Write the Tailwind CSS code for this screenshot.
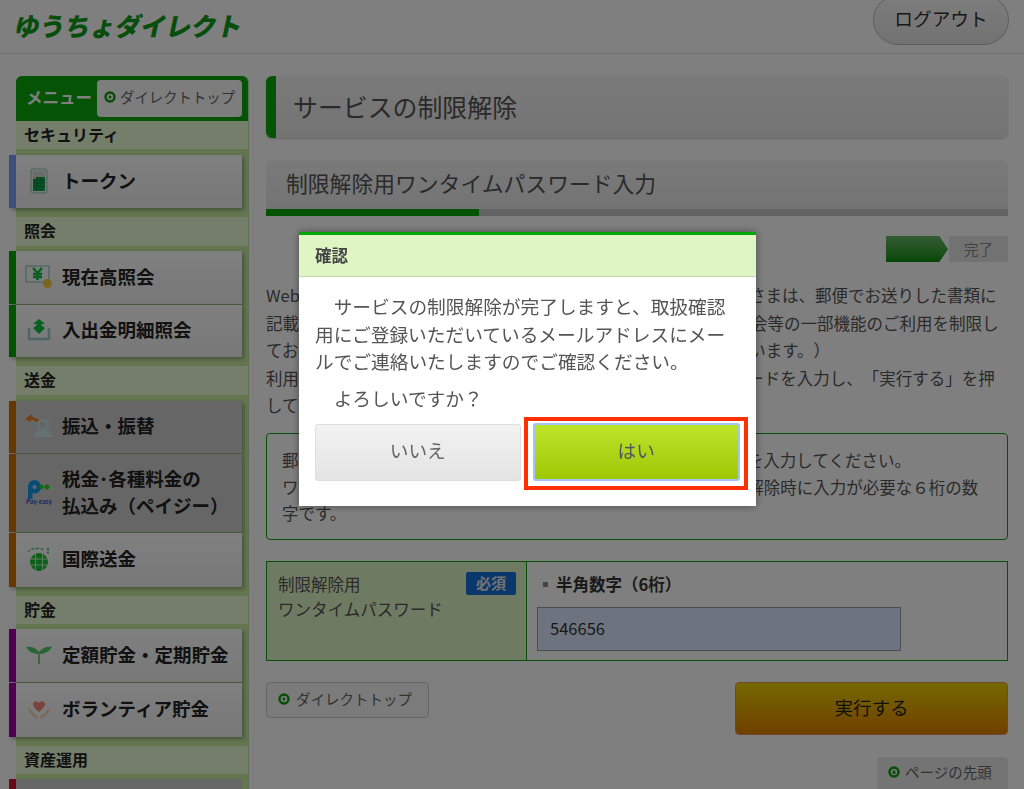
<!DOCTYPE html>
<html lang="ja">
<head>
    <meta charset="UTF-8">
    <meta name="viewport" content="width=device-width, initial-scale=1.0">
    <title>ゆうちょダイレクト</title>
    <script src="https://cdn.jsdelivr.net/npm/@tailwindcss/browser@4"></script>
</head>
<body class="h-[789px] overflow-hidden bg-white text-[#333] text-[16.5px] [text-spacing-trim:space-all] [font-family:'Noto_Sans_CJK_JP',sans-serif]">

    <!-- ヘッダー -->
    <header class="h-[54px] flex justify-between border-b border-[#e4e4e4] pl-[15px] pr-[15px]">
        <div class="h-[50px] leading-[50px] text-[25.5px] font-black text-[#0f9a18] -skew-x-12 whitespace-nowrap tracking-[-0.2px]">ゆうちょダイレクト</div>
        <button class="-mt-[5px] w-[136px] h-[50px] pb-[3px] rounded-full border border-[#bbb] bg-gradient-to-b from-[#fafafa] to-[#e4e4e4] text-[18.7px]">ログアウト</button>
    </header>

    <div class="flex pt-[22px] pl-[16px]">
        <!-- サイドメニュー -->
        <nav class="w-[233px] shrink-0 h-[713px] overflow-visible bg-[#c6eca0] border-r border-[#c0dca8] rounded-t-md">
            <div class="h-[45px] bg-[#0aa80a] rounded-t-md flex items-center justify-between pl-[10px] pr-[6px]">
                <span class="text-white font-bold text-[16.5px] whitespace-nowrap pb-[2px]">メニュー</span>
                <a class="w-[145px] h-[37px] pb-[3px] bg-[#fafafa] rounded-[4px] flex items-center pl-[7px] gap-[4px] text-[14.4px] text-[#666] whitespace-nowrap">
                    <svg class="w-[12px] h-[12px]" viewBox="0 0 12 12"><circle cx="6" cy="6" r="4.5" fill="none" stroke="#0a9a0a" stroke-width="2.4"/><path d="M4.8 3.8 8 6l-3.2 2.2z" fill="#0a9a0a"/></svg>ダイレクトトップ
                </a>
            </div>

            <h2 class="h-[28px] bg-[#eafdd6] pl-[8px] leading-[26px] font-bold text-[16px] text-[#222]">セキュリティ</h2>
            <a class="mt-[6px] -ml-[7px] w-[233px] h-[53px] pb-[2px] border-l-[7px] border-[#7a9cf5] bg-gradient-to-b from-white to-[#f0f0f0] shadow-[2px_2px_4px_rgba(0,0,0,.3)] flex items-center font-bold text-[18.5px] text-[#222]">
                <span class="w-[46px] flex justify-center"><svg class="w-[18px] h-[26px]" viewBox="0 0 18 26"><rect x="1" y="1" width="16" height="24" rx="2" fill="#e8f4ee" stroke="#8cc8b0"/><rect x="3" y="3" width="12" height="6" fill="#d8d8d8"/><rect x="3" y="9" width="12" height="14" fill="#10a850"/><path d="M3 12h12M3 15h12M3 18h12M7 9v14M11 9v14" stroke="#0a7a38" stroke-width=".8"/><rect x="3" y="9" width="3" height="2" fill="#f0d040"/></svg></span>トークン
            </a>

            <h2 class="mt-[9px] h-[29px] bg-[#eafdd6] pl-[8px] leading-[27px] font-bold text-[16px] text-[#222]">照会</h2>
            <a class="mt-[5px] -ml-[7px] w-[233px] h-[53px] pb-[2px] border-l-[7px] border-[#00a800] bg-gradient-to-b from-white to-[#f0f0f0] shadow-[2px_2px_4px_rgba(0,0,0,.3)] flex items-center font-bold text-[18.5px] text-[#222]">
                <span class="w-[46px] flex justify-center"><svg class="w-[28px] h-[26px]" viewBox="0 0 28 26"><rect x="1" y="2" width="23" height="16" fill="#f4fbf8" stroke="#a8d0c8" stroke-width="1.5"/><path d="M8 4l4.500 5L17 4M12.500 9v7M8 10h9M8 13h9" fill="none" stroke="#10c040" stroke-width="2.400"/><circle cx="22.500" cy="19.500" r="4.500" fill="#f8c838"/></svg></span>現在高照会
            </a>
            <a class="mt-[1px] -ml-[7px] w-[233px] h-[52px] pb-[2px] border-l-[7px] border-[#00a800] bg-gradient-to-b from-white to-[#f0f0f0] shadow-[2px_2px_4px_rgba(0,0,0,.3)] flex items-center font-bold text-[18.5px] text-[#222]">
                <span class="w-[46px] flex justify-center"><svg class="w-[24px] h-[24px]" viewBox="0 0 24 24"><path d="M2 10v11h20V10" fill="none" stroke="#a0ccc8" stroke-width="2.500"/><path d="M12 1l6 5h-3.500v1.500L18 10l-6 6-6-6 3.500-2.500V6H6z" fill="#10c040"/></svg></span>入出金明細照会
            </a>

            <h2 class="mt-[9px] h-[29px] bg-[#eafdd6] pl-[8px] leading-[27px] font-bold text-[16px] text-[#222]">送金</h2>
            <a class="mt-[6px] -ml-[7px] w-[233px] h-[52px] pb-[2px] border-l-[7px] border-[#c87000] bg-[#cdcdcd] shadow-[2px_2px_4px_rgba(0,0,0,.3)] flex items-center font-bold text-[18.5px] text-[#222]">
                <span class="w-[46px] flex justify-center"><svg class="w-[28px] h-[24px]" viewBox="0 0 28 24"><path d="M0 5l7-5v2.500l9 4-1 3-9-4V8z" fill="#f08030"/><circle cx="18" cy="11" r="5" fill="none" stroke="#c8e4e8" stroke-width="2.400"/><path d="M9 23c0-5 4-6 9-6s9 1 9 6z" fill="#c8e4e8"/></svg></span>振込・振替
            </a>
            <a class="mt-[1px] -ml-[7px] w-[233px] h-[78px] pb-[2px] border-l-[7px] border-[#c87000] bg-[#cdcdcd] shadow-[2px_2px_4px_rgba(0,0,0,.3)] flex items-center font-bold text-[18.5px] leading-[27px] text-[#222]">
                <span class="w-[46px] flex justify-center"><svg class="w-[26px] h-[26px]" viewBox="0 0 26 26"><path d="M2 20V8c0-4 3-7 6.500-7S15 4 15 8s-3 6.500-6.500 6.500c-1 0-1.500-.300-2-.500v6z" fill="#1098e8"/><circle cx="8.500" cy="8" r="2" fill="#c8c8e8"/><circle cx="15" cy="8" r="2.400" fill="#20d020"/><circle cx="21" cy="8" r="2.400" fill="#20d020"/><path d="M15 8h6" stroke="#20d020"/><text x="0" y="25" font-size="6" fill="#3050c0" textLength="26">Pay-easy</text></svg></span>
                <span>税金･各種料金の<br>払込み（ペイジー）</span>
            </a>
            <a class="mt-[1px] -ml-[7px] w-[233px] h-[54px] pb-[2px] border-l-[7px] border-[#c87000] bg-gradient-to-b from-white to-[#f0f0f0] shadow-[2px_2px_4px_rgba(0,0,0,.3)] flex items-center font-bold text-[18.5px] text-[#222]">
                <span class="w-[46px] flex justify-center"><svg class="w-[26px] h-[26px]" viewBox="0 0 26 26"><path d="M2 6c3-4 11-5 16-2" fill="none" stroke="#10b040" stroke-dasharray="3 1.500"/><path d="M22 2v6" stroke="#10b040" stroke-width="1.500" stroke-dasharray="2 1.500"/><circle cx="13" cy="16" r="9" fill="#18c030"/><path d="M4 13h18M4 19h18M9.500 7.500v17M16.500 7.500v17" stroke="#c0f0c8"/></svg></span>国際送金
            </a>

            <h2 class="mt-[9px] h-[28px] bg-[#eafdd6] pl-[8px] leading-[26px] font-bold text-[16px] text-[#222]">貯金</h2>
            <a class="mt-[5px] -ml-[7px] w-[233px] h-[53px] pb-[2px] border-l-[7px] border-[#a000a0] bg-gradient-to-b from-white to-[#f0f0f0] shadow-[2px_2px_4px_rgba(0,0,0,.3)] flex items-center font-bold text-[18.5px] text-[#222]">
                <span class="w-[46px] flex justify-center"><svg class="w-[26px] h-[18px]" viewBox="0 0 26 18"><path d="M12 8C8 8 3 6 0 1c4-.500 9 0 12 4z" fill="#50c868"/><path d="M14 8c4 0 9-2 12-7-4-.500-9 0-12 4z" fill="#50c868"/><path d="M13 5v13" stroke="#80c890" stroke-width="2"/></svg></span>定額貯金・定期貯金
            </a>
            <a class="mt-[1px] -ml-[7px] w-[233px] h-[54px] pb-[2px] border-l-[7px] border-[#a000a0] bg-gradient-to-b from-white to-[#f0f0f0] shadow-[2px_2px_4px_rgba(0,0,0,.3)] flex items-center font-bold text-[18.5px] text-[#222]">
                <span class="w-[46px] flex justify-center"><svg class="w-[24px] h-[22px]" viewBox="0 0 24 22"><path d="M12 14C9 11 6 9 6 6c0-3 4-4 6-1 2-3 6-2 6 1 0 3-3 5-6 8z" fill="#f08878"/><path d="M1 9c0 5 4 9 9 12l1-3c-3-1-5-3-7-6zM23 9c0 5-4 9-9 12l-1-3c3-1 5-3 7-6z" fill="#f8d4b0"/></svg></span>ボランティア貯金
            </a>

            <h2 class="mt-[9px] h-[28px] bg-[#eafdd6] pl-[8px] leading-[26px] font-bold text-[16px] text-[#222]">資産運用</h2>
            <a class="mt-[5px] -ml-[7px] w-[233px] h-[10px] border-l-[7px] border-[#d01030] bg-[#cdcdcd] block"></a>
        </nav>

        <!-- メイン -->
        <main class="ml-[17px] w-[742px] shrink-0">
            <div class="h-[62px] rounded-md border-l-[10px] border-[#0aa80a] bg-gradient-to-b from-[#f4f4f4] to-[#e8e8e8] shadow-[0_1px_2px_rgba(0,0,0,.2)] flex items-center pl-[17px] text-[24.900px] text-[#555]">サービスの制限解除</div>

            <div class="mt-[22px] h-[49px] pb-[2px] rounded-t-md bg-gradient-to-b from-[#f4f4f4] to-[#e8e8e8] flex items-center pl-[20px] text-[21.800px] text-[#555]">制限解除用ワンタイムパスワード入力</div>
            <div class="h-[7px] bg-[#c8c8c8]"><div class="w-[213px] h-full bg-[#0aa80a]"></div></div>

            <div class="mt-[20px] flex justify-end gap-[1px]">
                <div class="w-[62px] h-[26px] bg-gradient-to-b from-[#68b868] to-[#009000] [clip-path:polygon(0_0,86%_0,100%_50%,86%_100%,0_100%)]"></div>
                <div class="w-[59px] h-[26px] bg-[#e4e4e4] text-center leading-[25px] text-[14.500px] text-[#888]">完了</div>
            </div>

            <p class="mt-[20px] leading-[27.500px] text-[#555] whitespace-nowrap">Web&nbsp;サービスの利用制限解除をご希望のゆうちょダイレクトお客さまは、郵便でお送りした書類に<br>記載されているワンタイムパスワードを入力&nbsp;&nbsp;いただくまで残高照会等の一部機能のご利用を制限し<br>ております。（制限解除前も照会はご利用いただける&nbsp;&nbsp;ようにしています。）<br>利用を開始するには、書類にて記載されている&nbsp;ワンタイムパスワードを入力し、「実行する」を押<br>してください。</p>

            <div class="mt-[13.500px] h-[107px] rounded-[4px] border border-[#10a010] pl-[15px] pt-[13px] leading-[26.500px] text-[#555] whitespace-nowrap">郵便でお送りした書類に記載されている&nbsp;ワンタイムパスワードを入力してください。<br>ワンタイムパスワードは、ゆうちょダイレクトの&nbsp;ご利用の制限解除時に入力が必要な６桁の数<br>字です。</div>

            <div class="mt-[21px] h-[100px] border border-[#10a010] flex">
                <div class="w-[260px] bg-[#dff5c4] border-r border-[#10a010] pl-[11px] pt-[9px] pr-[10px] leading-[26px] text-[#555]">
                    <div class="flex justify-between items-start">制限解除用<span class="mt-[1px] w-[50px] h-[23px] rounded-[2px] bg-[#1670d8] text-[#e8e8e8] text-[15px] font-bold text-center leading-[22px]">必須</span></div>
                    <div class="-mt-[1px] whitespace-nowrap">ワンタイムパスワード</div>
                </div>
                <div class="flex-1 pl-[10px] pt-[9px]">
                    <div class="flex items-center gap-[8px] font-bold text-[#333] pl-[6px] h-[26px]"><span class="w-[5px] h-[5px] bg-[#888]"></span>半角数字（6桁）</div>
                    <input class="mt-[10px] w-[364px] h-[44px] pb-[3px] bg-[#dce8ff] border border-[#999] pl-[12px] text-[#333] outline-none" value="546656">
                </div>
            </div>

            <div class="mt-[21px] flex justify-between items-start">
                <a class="w-[163px] h-[36px] pb-[2px] rounded-[4px] border border-[#ccc] bg-[#f6f6f6] flex items-center pl-[11px] gap-[6px] text-[14.500px] text-[#666] whitespace-nowrap">
                    <svg class="w-[12px] h-[12px]" viewBox="0 0 12 12"><circle cx="6" cy="6" r="4.500" fill="none" stroke="#0a9a0a" stroke-width="2.400"/><path d="M4.800 3.800 8 6l-3.200 2.200z" fill="#0a9a0a"/></svg>ダイレクトトップ
                </a>
                <button class="w-[273px] h-[53px] pb-[2px] rounded-[4px] border border-[#e89060] bg-gradient-to-b from-[#e8d000] to-[#e08000] text-[18.500px] text-[#222]">実行する</button>
            </div>

            <div class="mt-[22px] flex justify-end">
                <a class="w-[131px] h-[32px] pb-[3px] rounded-t-[4px] bg-[#e8e8e8] flex items-center pl-[11px] gap-[5px] text-[14.500px] text-[#666] whitespace-nowrap">
                    <svg class="w-[12px] h-[12px]" viewBox="0 0 12 12"><circle cx="6" cy="6" r="4.500" fill="none" stroke="#0a9a0a" stroke-width="2.400"/><path d="M6 3.800 8.200 7.500H3.800z" fill="#0a9a0a"/></svg>ページの先頭
                </a>
            </div>
        </main>
    </div>

    <!-- 確認ダイアログ -->
    <div class="fixed inset-0 bg-black/50"></div>
    <div class="fixed left-[299px] top-[232px] w-[457px] h-[274px] bg-white border-t-[3px] border-[#00a800] shadow-[0_0_8px_rgba(0,0,0,.4)]">
        <div class="h-[42px] bg-[#dff5c4] border-b border-[#c8d4b0] pl-[16px] leading-[40px] font-bold text-[#444]">確認</div>
        <div class="px-[16px] pt-[15px] text-[18.700px] leading-[27.500px] text-[#555]">
            <p class="indent-[1em] whitespace-nowrap">サービスの制限解除が完了しますと、取扱確認<br>用にご登録いただいているメールアドレスにメー<br>ルでご連絡いたしますのでご確認ください。</p>
            <p class="mt-[9px] indent-[1em]">よろしいですか？</p>
            <div class="mt-[12px] flex gap-[12px] items-end">
                <button class="w-[206px] h-[57px] pb-[5px] rounded-[3px] border border-[#ddd] bg-gradient-to-b from-[#f2f2f2] to-[#e4e4e4] text-[#666]">いいえ</button>
                <button class="w-[208px] h-[58px] pb-[5px] rounded-[3px] border-2 border-[#a4c4f4] bg-gradient-to-b from-[#bde428] to-[#a0c800] text-[#556]">はい</button>
            </div>
        </div>
        <!-- 注釈の赤枠 -->
        <div class="absolute left-[225px] top-[182px] w-[224px] h-[73px] border-[4px] border-[#ff3000]"></div>
    </div>

</body>
</html>
